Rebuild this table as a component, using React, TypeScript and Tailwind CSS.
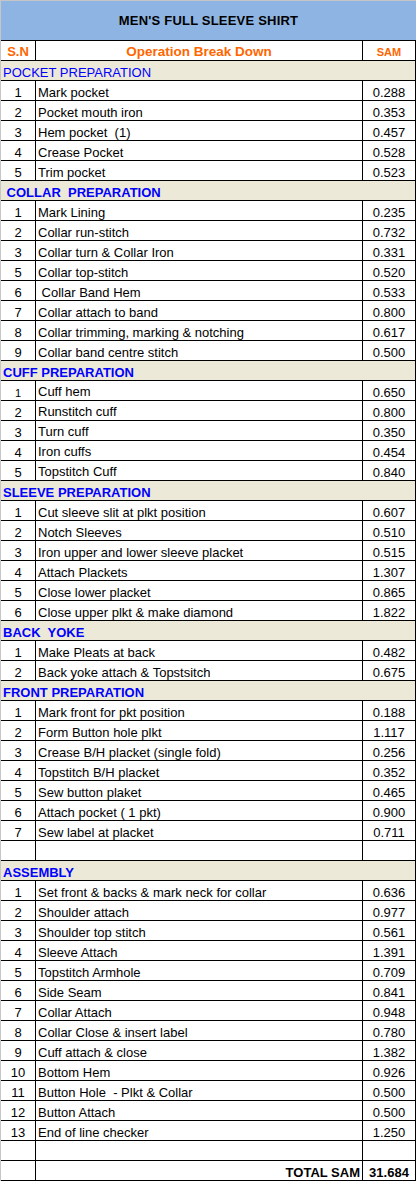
type Op = { sn: string; name: string; sam: string };

type Section = {
  title: string;
  bold?: boolean;
  ops: Op[];
  nudge?: boolean;
  trailingBlank?: boolean;
};

const sections: Section[] = [
  {
    title: "POCKET PREPARATION",
    ops: [
      { sn: "1", name: "Mark pocket", sam: "0.288" },
      { sn: "2", name: "Pocket mouth iron", sam: "0.353" },
      { sn: "3", name: "Hem pocket  (1)", sam: "0.457" },
      { sn: "4", name: "Crease Pocket", sam: "0.528" },
      { sn: "5", name: "Trim pocket", sam: "0.523" },
    ],
  },
  {
    title: " COLLAR  PREPARATION",
    bold: true,
    ops: [
      { sn: "1", name: "Mark Lining", sam: "0.235" },
      { sn: "2", name: "Collar run-stitch", sam: "0.732" },
      { sn: "3", name: "Collar turn & Collar Iron", sam: "0.331" },
      { sn: "5", name: "Collar top-stitch", sam: "0.520" },
      { sn: "6", name: " Collar Band Hem", sam: "0.533" },
      { sn: "7", name: "Collar attach to band", sam: "0.800" },
      { sn: "8", name: "Collar trimming, marking & notching", sam: "0.617" },
      { sn: "9", name: "Collar band centre stitch", sam: "0.500" },
    ],
  },
  {
    title: "CUFF PREPARATION",
    bold: true,
    nudge: true,
    ops: [
      { sn: "1", name: "Cuff hem", sam: "0.650" },
      { sn: "2", name: "Runstitch cuff", sam: "0.800" },
      { sn: "3", name: "Turn cuff", sam: "0.350" },
      { sn: "4", name: "Iron cuffs", sam: "0.454" },
      { sn: "5", name: "Topstitch Cuff", sam: "0.840" },
    ],
  },
  {
    title: "SLEEVE PREPARATION",
    bold: true,
    ops: [
      { sn: "1", name: "Cut sleeve slit at plkt position", sam: "0.607" },
      { sn: "2", name: "Notch Sleeves", sam: "0.510" },
      { sn: "3", name: "Iron upper and lower sleeve placket", sam: "0.515" },
      { sn: "4", name: "Attach Plackets", sam: "1.307" },
      { sn: "5", name: "Close lower placket", sam: "0.865" },
      { sn: "6", name: "Close upper plkt & make diamond", sam: "1.822" },
    ],
  },
  {
    title: "BACK  YOKE",
    bold: true,
    ops: [
      { sn: "1", name: "Make Pleats at back", sam: "0.482" },
      { sn: "2", name: "Back yoke attach & Topstsitch", sam: "0.675" },
    ],
  },
  {
    title: "FRONT PREPARATION",
    bold: true,
    trailingBlank: true,
    ops: [
      { sn: "1", name: "Mark front for pkt position", sam: "0.188" },
      { sn: "2", name: "Form Button hole plkt", sam: "1.117" },
      { sn: "3", name: "Crease B/H placket (single fold)", sam: "0.256" },
      { sn: "4", name: "Topstitch B/H placket", sam: "0.352" },
      { sn: "5", name: "Sew button plaket", sam: "0.465" },
      { sn: "6", name: "Attach pocket ( 1 pkt)", sam: "0.900" },
      { sn: "7", name: "Sew label at placket", sam: "0.711" },
    ],
  },
  {
    title: "ASSEMBLY",
    bold: true,
    trailingBlank: true,
    ops: [
      { sn: "1", name: "Set front & backs & mark neck for collar", sam: "0.636" },
      { sn: "2", name: "Shoulder attach", sam: "0.977" },
      { sn: "3", name: "Shoulder top stitch", sam: "0.561" },
      { sn: "4", name: "Sleeve Attach", sam: "1.391" },
      { sn: "5", name: "Topstitch Armhole", sam: "0.709" },
      { sn: "6", name: "Side Seam", sam: "0.841" },
      { sn: "7", name: "Collar Attach", sam: "0.948" },
      { sn: "8", name: "Collar Close & insert label", sam: "0.780" },
      { sn: "9", name: "Cuff attach & close", sam: "1.382" },
      { sn: "10", name: "Bottom Hem", sam: "0.926" },
      { sn: "11", name: "Button Hole  - Plkt & Collar", sam: "0.500" },
      { sn: "12", name: "Button Attach", sam: "0.500" },
      { sn: "13", name: "End of line checker", sam: "1.250" },
    ],
  },
];

// spreadsheet row: 19px content + 1px black rule underneath
function Row({ children, className = "" }: { children: React.ReactNode; className?: string }) {
  return (
    <div className={`flex h-[20px] border-b border-black ${className}`}>{children}</div>
  );
}

function Cells({
  sn,
  name,
  sam,
  nudge,
  small,
}: {
  sn: React.ReactNode;
  name: React.ReactNode;
  sam: React.ReactNode;
  nudge?: boolean;
  small?: boolean;
}) {
  return (
    <>
      <div
        className={`flex w-[35px] items-end justify-center border-r border-black pb-0 ${
          small ? "text-[11px] leading-[13px]" : "leading-[15px]"
        }`}
      >
        {sn}
      </div>
      <div
        className={`flex w-[327px] items-end border-r border-black pl-[2px] leading-[15px] whitespace-pre ${
          nudge ? "pb-[1px]" : ""
        }`}
      >
        {name}
      </div>
      <div className="flex w-[53px] items-end justify-center border-r border-black leading-[15px]">
        {sam}
      </div>
    </>
  );
}

export default function App() {
  return (
    <div
      className="w-[416px] border-t border-l border-[#c6c6c6] bg-white text-[13px] text-black"
      style={{ fontFamily: '"Liberation Sans", Arial, sans-serif' }}
    >
      <div className="flex h-[40px] items-center justify-center border-b border-black bg-[#8db4e2] pt-px text-[13px] font-bold tracking-[0.2px]">
        MEN&apos;S FULL SLEEVE SHIRT
      </div>

      <Row className="text-[#ff6600] font-bold">
        <div className="flex w-[35px] items-end justify-center border-r border-black leading-[16px]">
          S.N
        </div>
        <div className="flex w-[327px] items-end justify-center border-r border-black text-[13.5px] leading-[16px]">
          Operation Break Down
        </div>
        <div className="flex w-[53px] items-end justify-center border-r border-black text-[11px] leading-[15px]">
          SAM
        </div>
      </Row>

      {sections.map((s) => (
        <div key={s.title}>
          <Row className="border-r border-r-black bg-[#ece9d8]">
            <div
              className={`flex items-end pl-[2px] leading-[15px] whitespace-pre text-[#0000ff] ${
                s.bold ? "font-bold" : ""
              }`}
            >
              {s.title}
            </div>
          </Row>
          {s.ops.map((op, i) => (
            <Row key={op.sn + op.name}>
              <Cells
                sn={op.sn}
                name={op.name}
                sam={op.sam}
                nudge={s.nudge}
                small={s.nudge && i === 0}
              />
            </Row>
          ))}
          {s.trailingBlank && (
            <Row>
              <Cells sn="" name="" sam="" />
            </Row>
          )}
        </div>
      ))}

      <Row>
        <div className="w-[35px] border-r border-black" />
        <div className="flex w-[327px] items-end justify-end border-r border-black pr-[2px] font-bold leading-[15px]">
          TOTAL SAM
        </div>
        <div className="flex w-[53px] items-end justify-center border-r border-black font-bold leading-[15px]">
          31.684
        </div>
      </Row>
    </div>
  );
}
